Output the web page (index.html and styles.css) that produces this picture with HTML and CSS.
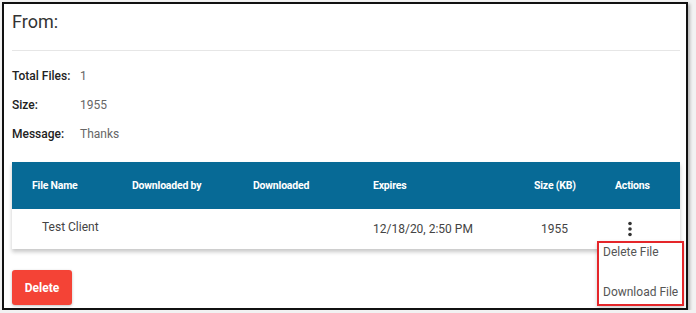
FILE: index.html
```html
<!DOCTYPE html>
<html>
  <head>
    <title>Transfer details</title>
    <link rel="stylesheet" href="styles.css">
  </head>
  <body>
    <div class="frame">
      <h2 class="from">From:</h2>
      <hr class="sep">

      <div class="info">
        <div class="info-row"><span class="lbl">Total Files:</span><span class="val">1</span></div>
        <div class="info-row"><span class="lbl">Size:</span><span class="val">1955</span></div>
        <div class="info-row"><span class="lbl">Message:</span><span class="val">Thanks</span></div>
      </div>

      <div class="card">
        <div class="thead">
          <div class="c1">File Name</div>
          <div class="c2">Downloaded by</div>
          <div class="c3">Downloaded</div>
          <div class="c4">Expires</div>
          <div class="c5">Size (KB)</div>
          <div class="c6">Actions</div>
        </div>
        <div class="trow">
          <div class="c1 name">Test Client</div>
          <div class="c2"></div>
          <div class="c3"></div>
          <div class="c4">12/18/20, 2:50 PM</div>
          <div class="c5 num">1955</div>
          <div class="c6 act">
            <svg width="6" height="16" viewBox="0 0 6 16">
              <circle cx="3" cy="2.5" r="1.8" fill="#333"/>
              <circle cx="3" cy="8" r="1.8" fill="#333"/>
              <circle cx="3" cy="13.5" r="1.8" fill="#333"/>
            </svg>
          </div>
        </div>
      </div>

      <button class="btn-delete">Delete</button>

      <div class="menu">
        <div class="menu-item">Delete File</div>
        <div class="menu-item">Download File</div>
      </div>
    </div>
  </body>
</html>
```

FILE: styles.css
```css
html, body {
  margin: 0;
  padding: 0;
  background: #f2f2f2;
  font-family: Roboto, "Liberation Sans", sans-serif;
}

.frame {
  position: relative;
  box-sizing: border-box;
  width: 686px;
  height: 308px;
  margin: 2px 0 0 2px;
  border: 2px solid #111;
  background: #fff;
  padding: 7px 6px 0 8px;
  box-shadow: 2px 2px 3px rgba(0,0,0,0.25);
}

.from {
  margin: 0;
  font-size: 18px;
  font-weight: 400;
  color: #333;
  line-height: 22px;
  height: 39px;
}

.sep {
  border: 0;
  border-top: 1px solid #e6e6e6;
  margin: 0 0 10px 0;
}

.info-row {
  display: flex;
  height: 29px;
  align-items: center;
  font-size: 12px;
}

.lbl {
  width: 68px;
  font-weight: 500;
  color: #222;
}

.val {
  color: #666;
}

.card {
  margin-top: 14px;
  box-shadow: 0 3px 4px rgba(0,0,0,0.22);
}

.thead, .trow {
  display: grid;
  grid-template-columns: 100px 121px 120px 161px 81px 86px;
  align-items: center;
}

.thead {
  height: 47px;
  background: #076a96;
  color: #fff;
  font-size: 10.5px;
  font-weight: 700;
  letter-spacing: -0.2px;
}

.thead > div {
  padding-left: 20px;
}

.trow {
  height: 40px;
  background: #fff;
  font-size: 12px;
  color: #444;
}

.trow > div {
  padding-left: 20px;
}

.trow .name {
  padding-left: 30px;
  margin-top: -4px;
}

.trow .num {
  padding-left: 27px;
}

.trow .act {
  padding-left: 32px;
  display: flex;
  align-items: center;
}

.btn-delete {
  display: block;
  margin-top: 21px;
  width: 60px;
  height: 35px;
  border: 0;
  border-radius: 3px;
  background: #f44336;
  color: #fff;
  font-family: Roboto, "Liberation Sans", sans-serif;
  font-size: 12px;
  font-weight: 700;
  box-shadow: 0 1px 3px rgba(0,0,0,0.25);
}

.menu {
  position: absolute;
  left: 593px;
  top: 237px;
  width: 87px;
  height: 65px;
  box-sizing: border-box;
  border: 2px solid #e5262a;
  background: #fff;
  box-shadow: 0 2px 4px rgba(0,0,0,0.2);
  padding-left: 4px;
}

.menu-item {
  font-size: 12px;
  color: #555;
  height: 20px;
  line-height: 18px;
}

.menu-item + .menu-item {
  margin-top: 20px;
}
```
